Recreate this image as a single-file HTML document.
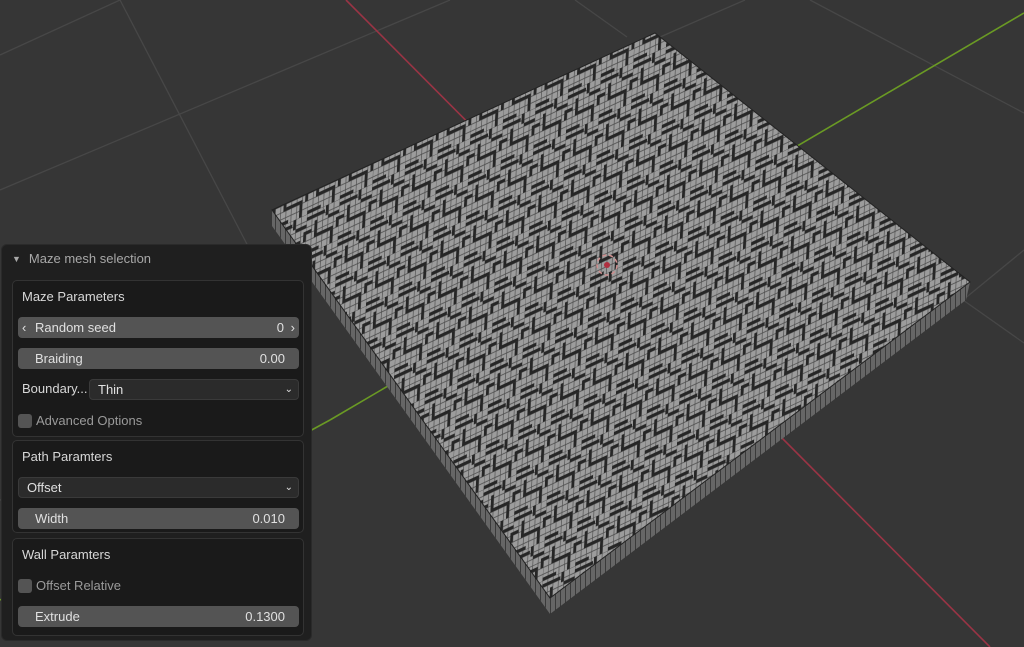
<!DOCTYPE html>
<html><head><style>
body{margin:0;width:1024px;height:647px;overflow:hidden;background:#363636;font-family:"Liberation Sans","DejaVu Sans",sans-serif;}
svg{position:absolute;left:0;top:0}
.panel{position:absolute;left:1px;top:244px;width:311px;height:397px;background:#1f1f1f;border-radius:6px;border:1px solid #2a2a2a;box-sizing:border-box}
.hdr{position:absolute;left:10px;top:6px;color:#a8a8a8;font-size:13px}
.hdr span{font-size:9px;margin-right:8px;position:relative;top:-1px}
.box{position:absolute;left:10px;width:292px;background:#1a1a1a;border:1px solid #333;border-radius:5px;box-sizing:border-box}
.t{position:absolute;left:9px;color:#d8d8d8;font-size:13px}
.f{position:absolute;left:5px;width:281px;height:21px;background:#545454;border-radius:4px;color:#e0e0e0;font-size:13px;line-height:21px}
.f .l{position:absolute;left:17px}
.f .r{position:absolute;right:14px}
.dd{background:#2b2b2b;border:1px solid #3a3a3a;box-sizing:border-box;line-height:19px}
.cb{position:absolute;left:5px;width:14px;height:14px;background:#545454;border-radius:3px}
.ct{position:absolute;left:23px;color:#9a9a9a;font-size:13px}
</style></head><body>
<svg width="1024" height="647">
<defs>
<pattern id="mz" width="36" height="36" patternUnits="userSpaceOnUse" patternTransform="rotate(-25) skewX(-28)">
<rect width="36" height="36" fill="#9c9c9c"/>
<path d="M0 0H36M0 6H36M0 12H36M0 18H36M0 24H36M0 30H36M0 0V36M6 0V36M12 0V36M18 0V36M24 0V36M30 0V36" stroke="#4a4a4a" stroke-width="0.7"/>
<g fill="#262626">
<rect x="0" y="3" width="20" height="3"/>
<rect x="24" y="9" width="12" height="3"/>
<rect x="9" y="9" width="3" height="15"/>
<rect x="12" y="21" width="18" height="3"/>
<rect x="27" y="24" width="3" height="12"/>
<rect x="0" y="33" width="15" height="3"/>
<rect x="21" y="0" width="3" height="9"/>
<rect x="0" y="15" width="6" height="3"/>
<rect x="33" y="15" width="3" height="9"/>
</g>
</pattern>
<pattern id="sd" width="5" height="20" patternUnits="userSpaceOnUse">
<rect width="5" height="20" fill="#666"/><path d="M0 0V20" stroke="#222" stroke-width="1.3"/>
</pattern>
</defs>
<g stroke="#474747" stroke-width="1.3" fill="none">
<path d="M0 55L120 0M120 0L250 250M0 190L450 0M575 0L627 37M745 0L660 37M810 0L1024 113M963 300L1024 250M963 300L1024 343"/>
<path d="M0 500L300 470"/>
</g>
<path d="M346 0L990 647" stroke="#9a3445" stroke-width="1.6"/>
<path d="M1024 13L330 420" stroke="#6a9a24" stroke-width="1.6"/>
<path d="M330 420L0 600" stroke="#6a9a24" stroke-width="1.6"/>
<polygon points="272,210 550,598 550,614 272,226" fill="url(#sd)"/>
<polygon points="550,598 970,282 966,300 550,614" fill="url(#sd)"/>
<polygon points="272,210 655,33 970,282 550,598" fill="url(#mz)" stroke="#222" stroke-width="1"/>
<circle cx="607" cy="265" r="10" fill="none" stroke="#d09090" stroke-width="1.5" stroke-dasharray="4 3"/>
<circle cx="607" cy="265" r="3" fill="#b03040"/>
</svg>
<div class="panel">
<div class="hdr"><span>▼</span>Maze mesh selection</div>
<div class="box" style="top:35px;height:157px">
<div class="t" style="top:8px">Maze Parameters</div>
<div class="f" style="top:36px"><span style="position:absolute;left:4px">‹</span><span class="l">Random seed</span><span class="r" style="right:15px">0</span><span style="position:absolute;right:4px">›</span></div>
<div class="f" style="top:67px"><span class="l">Braiding</span><span class="r">0.00</span></div>
<div style="position:absolute;left:9px;top:100px;color:#d8d8d8;font-size:13px">Boundary...</div>
<div class="f dd" style="top:98px;left:76px;width:210px"><span style="position:absolute;left:8px">Thin</span><span style="position:absolute;right:5px;font-size:10px">⌄</span></div>
<div class="cb" style="top:133px"></div><div class="ct" style="top:132px">Advanced Options</div>
</div>
<div class="box" style="top:195px;height:93px">
<div class="t" style="top:8px">Path Paramters</div>
<div class="f dd" style="top:36px"><span style="position:absolute;left:8px">Offset</span><span style="position:absolute;right:5px;font-size:10px">⌄</span></div>
<div class="f" style="top:67px"><span class="l">Width</span><span class="r">0.010</span></div>
</div>
<div class="box" style="top:293px;height:98px">
<div class="t" style="top:8px">Wall Paramters</div>
<div class="cb" style="top:40px"></div><div class="ct" style="top:39px">Offset Relative</div>
<div class="f" style="top:67px"><span class="l">Extrude</span><span class="r">0.1300</span></div>
</div>
</div>
</body></html>
